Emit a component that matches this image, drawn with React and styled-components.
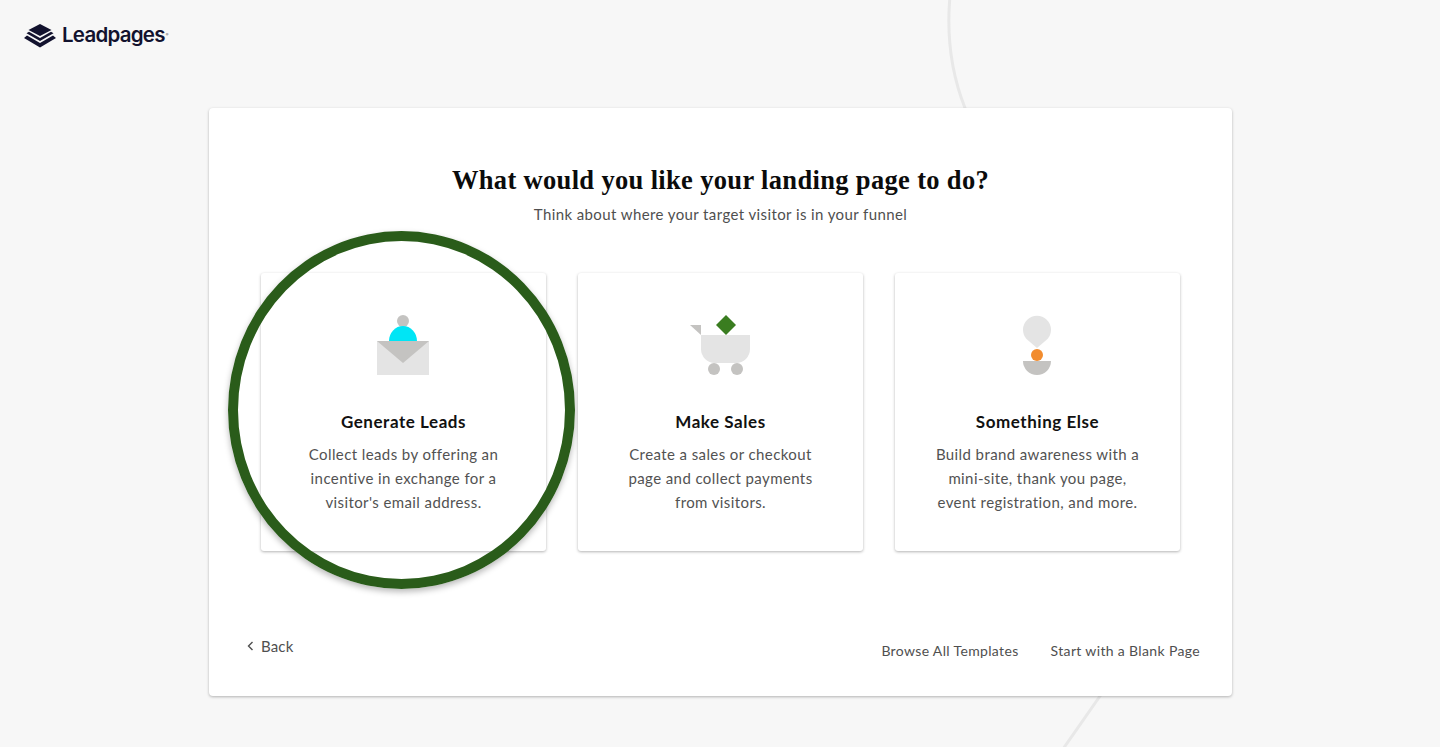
import React from "react";
import styled, { createGlobalStyle } from "styled-components";

const Global = createGlobalStyle`
  html, body { margin: 0; padding: 0; height: 100%; }
  body { background: #f7f7f7; font-family: "Lato", "Liberation Sans", sans-serif; color: #4a4a4a; }
`;

const Page = styled.div`
  position: relative;
  width: 1440px;
  height: 747px;
  overflow: hidden;
  background: #f7f7f7;
`;

const Curve = styled.svg`
  position: absolute;
  inset: 0;
  width: 1440px;
  height: 747px;
`;

const Header = styled.header`
  position: relative;
  height: 108px;
  box-sizing: border-box;
  padding: 21px 0 0 24px;
  display: flex;
  align-items: flex-start;
  gap: 6px;
`;

const LogoText = styled.span`
  font-family: "Inter", sans-serif;
  font-weight: 600;
  font-size: 20.500px;
  line-height: 28px;
  letter-spacing: -0.750px;
  color: #12122e;
`;

const LogoMark = styled.sup`
  font-size: 4px;
  line-height: 28px;
  color: #555;
  margin-left: 1px;
  vertical-align: 6px;
`;

const Panel = styled.main`
  position: relative;
  box-sizing: border-box;
  width: 1023px;
  height: 588px;
  margin-left: 209px;
  padding: 54px 52px 0;
  background: #fff;
  border-radius: 4px;
  box-shadow: 0 1px 3px rgba(0, 0, 0, 0.28);
  display: flex;
  flex-direction: column;
`;

const Title = styled.h1`
  margin: 0;
  font-family: "Liberation Serif", serif;
  font-weight: 700;
  font-size: 26.500px;
  line-height: 36px;
  letter-spacing: 0.340px;
  text-align: center;
  color: #0b0b0b;
`;

const Subtitle = styled.p`
  margin: 4px 0 0;
  font-size: 15px;
  line-height: 24px;
  text-align: center;
  letter-spacing: 0.400px;
  color: #4f4f4f;
`;

const Options = styled.div`
  margin-top: 47px;
  display: grid;
  grid-template-columns: repeat(3, 285px);
  column-gap: 32px;
`;

const Option = styled.article`
  position: relative;
  box-sizing: border-box;
  height: 278px;
  padding: 40px 24px 0;
  background: #fff;
  border-radius: 3px;
  box-shadow: 0 1px 3px rgba(0, 0, 0, 0.3);
  display: flex;
  flex-direction: column;
  align-items: center;
  text-align: center;
`;

const Illustration = styled.svg`
  display: block;
  width: 70px;
  height: 64px;
  margin-left: -2px;
`;

const OptionTitle = styled.h2`
  margin: 33px 0 0;
  font-size: 17px;
  line-height: 24px;
  font-weight: 700;
  letter-spacing: 0.550px;
  color: #111;
`;

const OptionText = styled.p`
  margin: 8px 0 0;
  font-size: 15px;
  line-height: 24px;
  letter-spacing: 0.400px;
  color: #525252;
`;

const Ring = styled.div`
  position: absolute;
  left: -33px;
  top: -42px;
  box-sizing: border-box;
  width: 347px;
  height: 358px;
  border: 10px solid #2a5c1a;
  border-radius: 50%;
  box-shadow: 0 3px 6px rgba(0, 0, 0, 0.28);
  pointer-events: none;
`;

const Footer = styled.footer`
  margin: 83px -20px 0 -14px;
  display: flex;
  align-items: flex-start;
  justify-content: space-between;
  color: #4f4f4f;
`;

const BackLink = styled.a`
  display: flex;
  align-items: center;
  gap: 7px;
  font-size: 15px;
  line-height: 24px;
  letter-spacing: 0.150px;
`;

const Links = styled.nav`
  margin-top: 5px;
  display: flex;
  gap: 32px;
  font-size: 14px;
  line-height: 24px;
  letter-spacing: 0.350px;
`;

const StackLogo = () => (
  <svg width="32" height="27" viewBox="24 21 32 27" style={{ flex: "none" }}>
    <path d="M40 24 L51.500 30 L40 36 L28.500 30 Z" fill="#12122e" />
    <path d="M29 31.800 L40 38 L51 31.800 L53.500 33.300 L40 41 L26.500 33.300 Z" fill="#12122e" />
    <path d="M27 35.600 L40 43 L53 35.600 L56 38 L40 47.500 L24 38 Z" fill="#12122e" />
  </svg>
);

const LeadsIcon = () => (
  <Illustration viewBox="368 313 70 64">
    <circle cx="403" cy="321" r="6" fill="#c4c3c1" />
    <path d="M389 341 A14 15 0 0 1 417 341 Z" fill="#00e5f5" />
    <rect x="377" y="341" width="52" height="34" fill="#e4e4e4" />
    <path d="M377 341 H429 L403 363 Z" fill="#c4c3c1" />
  </Illustration>
);

const SalesIcon = () => (
  <Illustration viewBox="685 313 70 64">
    <path d="M690 325 H701 V335 Z" fill="#c4c3c1" />
    <path d="M726 315 L736 325 L726 335 L716 325 Z" fill="#3a7d20" />
    <path d="M701 335 H750 V349 A14 14 0 0 1 736 363 H715 A14 14 0 0 1 701 349 Z" fill="#e4e4e4" />
    <circle cx="714" cy="369" r="6" fill="#c4c3c1" />
    <circle cx="737" cy="369" r="6" fill="#c4c3c1" />
  </Illustration>
);

const ElseIcon = () => (
  <Illustration viewBox="1002 313 70 64">
    <path d="M1037 348 L1026.500 339 A14 14 0 1 1 1047.500 339 Z" fill="#e4e4e4" />
    <circle cx="1037" cy="355" r="6" fill="#f28c2e" />
    <path d="M1023 361 H1051 A14 14 0 0 1 1023 361 Z" fill="#c4c3c1" />
  </Illustration>
);

const options = [
  { title: "Generate Leads", lines: ["Collect leads by offering an", "incentive in exchange for a", "visitor's email address."], Icon: LeadsIcon, ringed: true },
  { title: "Make Sales", lines: ["Create a sales or checkout", "page and collect payments", "from visitors."], Icon: SalesIcon },
  { title: "Something Else", lines: ["Build brand awareness with a", "mini-site, thank you page,", "event registration, and more."], Icon: ElseIcon },
];

export default function App() {
  return (
    <Page>
      <Global />
      <Curve viewBox="0 0 1440 747" fill="none">
        <path d="M950 -4 C946 40 952 75 965 108 C1040 300 1210 500 1100 696 L1063 749" stroke="#e8e8e8" strokeWidth="3" />
      </Curve>
      <Header>
        <StackLogo />
        <LogoText>Leadpages<LogoMark>®</LogoMark></LogoText>
      </Header>
      <Panel>
        <Title>What would you like your landing page to do?</Title>
        <Subtitle>Think about where your target visitor is in your funnel</Subtitle>
        <Options>
          {options.map(({ title, lines, Icon, ringed }) => (
            <Option key={title}>
              <Icon />
              <OptionTitle>{title}</OptionTitle>
              <OptionText>
                {lines.map((l) => (
                  <React.Fragment key={l}>{l}<br /></React.Fragment>
                ))}
              </OptionText>
              {ringed && <Ring />}
            </Option>
          ))}
        </Options>
        <Footer>
          <BackLink>
            <svg width="7" height="10" viewBox="0 0 7 10" fill="none">
              <path d="M5.500 1 L1.500 5 L5.500 9" stroke="#4f4f4f" strokeWidth="1.400" />
            </svg>
            Back
          </BackLink>
          <Links>
            <span>Browse All Templates</span>
            <span>Start with a Blank Page</span>
          </Links>
        </Footer>
      </Panel>
    </Page>
  );
}
